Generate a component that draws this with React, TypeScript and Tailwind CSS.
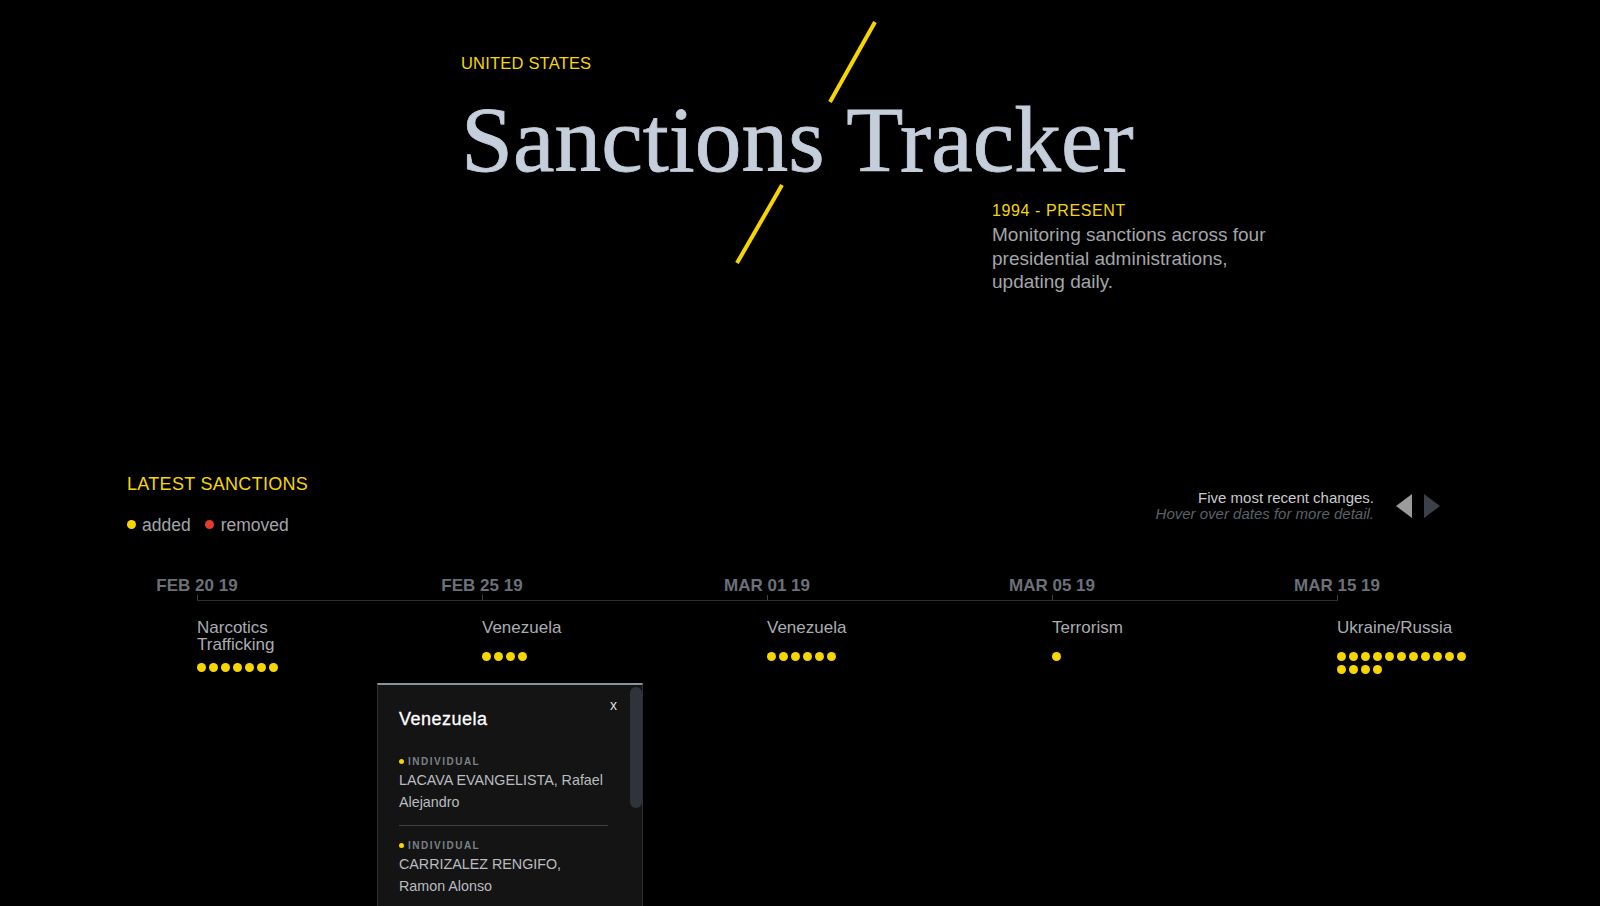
import { ReactNode } from 'react';

interface Change {
  date: string;
  category: string;
  added: number;
}

const CHANGES: Change[] = [
  { date: 'FEB 20 19', category: 'Narcotics Trafficking', added: 7 },
  { date: 'FEB 25 19', category: 'Venezuela', added: 4 },
  { date: 'MAR 01 19', category: 'Venezuela', added: 6 },
  { date: 'MAR 05 19', category: 'Terrorism', added: 1 },
  { date: 'MAR 15 19', category: 'Ukraine/Russia', added: 15 },
];

const DETAIL = [
  { type: 'INDIVIDUAL', name: 'LACAVA EVANGELISTA, Rafael Alejandro' },
  { type: 'INDIVIDUAL', name: 'CARRIZALEZ RENGIFO, Ramon Alonso' },
];

const SANS = "font-['Liberation_Sans',Arial,sans-serif]";

function Dot({ className }: { className: string }): ReactNode {
  return <span className={`inline-block shrink-0 rounded-full ${className}`} />;
}

export default function App() {
  return (
    <div className={`relative w-[1600px] h-[906px] overflow-hidden bg-black ${SANS}`}>
      {/* yellow slash behind the title */}
      <svg className="absolute left-0 top-0 pointer-events-none" width="1600" height="300">
        <line x1="875" y1="22" x2="830" y2="102" stroke="#f7d600" strokeWidth="4" />
        <line x1="782" y1="185" x2="737" y2="263" stroke="#f7d600" strokeWidth="4" />
      </svg>

      {/* Header */}
      <header className="pt-[53px] pl-[461px]">
        <p className="text-[16.5px] leading-[20px] tracking-[0.2px] text-[#f7d600]">UNITED STATES</p>
        <h1 className="mt-[20px] text-[93.5px] leading-[93px] text-[#c5cedb] font-['Liberation_Serif',Georgia,serif] whitespace-nowrap [-webkit-text-stroke:0.8px_#c5cedb]">
          Sanctions Tracker
        </h1>
        <div className="ml-[531px] mt-[15px] w-[300px]">
          <p className="text-[16px] leading-[20px] tracking-[0.6px] text-[#f7d600]">1994 - PRESENT</p>
          <p className="mt-[2px] text-[19px] leading-[23.5px] text-[#a3a6aa]">
            Monitoring sanctions across four presidential administrations, updating daily.
          </p>
        </div>
      </header>

      {/* Latest sanctions */}
      <section className="mt-[179px]">
        <div className="flex items-start justify-between pl-[127px] pr-[160px]">
          <div>
            <h2 className="text-[18px] leading-[22px] tracking-[0.3px] text-[#f7d600]">LATEST SANCTIONS</h2>
            <div className="mt-[19px] flex items-center text-[17.5px] leading-[22px] text-[#a3a6aa]">
              <Dot className="w-[9px] h-[9px] bg-[#f7d600]" />
              <span className="ml-[6px]">added</span>
              <Dot className="ml-[14px] w-[9px] h-[9px] bg-[#e33b2e]" />
              <span className="ml-[7px]">removed</span>
            </div>
          </div>
          <div className="mt-[17px] flex items-start">
            <div className="text-right text-[15px] leading-[16px]">
              <p className="text-[#c9cbce]">Five most recent changes.</p>
              <p className="italic text-[#5c6168]">Hover over dates for more detail.</p>
            </div>
            <div className="ml-[22px] mt-[4px] flex items-center gap-[12px]">
              <button className="w-0 h-0 border-y-[12.5px] border-y-transparent border-r-[16px] border-r-[#9b9b9b]" />
              <button className="w-0 h-0 border-y-[12.5px] border-y-transparent border-l-[16px] border-l-[#3c4048]" />
            </div>
          </div>
        </div>

        {/* Timeline */}
        <div className="mt-[40px] ml-[197px] flex">
          {CHANGES.map((c, i) => (
            <div key={c.date} className="w-[285px] shrink-0 flex flex-col">
              <div className="h-[19px] leading-[19px]">
                <span className="inline-block -translate-x-1/2 whitespace-nowrap text-[17px] font-bold text-[#6b7079]">
                  {c.date}
                </span>
              </div>
              <div className="w-px h-[5px] bg-[#3a3f46]" />
              <div className={`h-px bg-[#2c3036] ${i < CHANGES.length - 1 ? 'w-full' : 'w-px'}`} />
              <div className="mt-[18px] w-[135px]">
                <p className="min-h-[24px] text-[17px] leading-[17.5px] text-[#a9adb2]">{c.category}</p>
                <div className="mt-[9px] flex flex-wrap gap-x-[3px] gap-y-[4px]">
                  {Array.from({ length: c.added }).map((_, j) => (
                    <Dot key={j} className="w-[9px] h-[9px] bg-[#f7d600]" />
                  ))}
                </div>
              </div>
            </div>
          ))}
        </div>
      </section>

      {/* Detail popup */}
      <div className="absolute left-[377px] top-[683px] w-[266px] h-[240px] flex bg-[#141414] border-t-2 border-t-[#8c929a] border-x border-x-[#2b2f34]">
        <div className="w-[252px] pl-[21px] pr-[21px] pt-[23px]">
          <h3 className="text-[18px] leading-[22px] tracking-[0.5px] text-white [-webkit-text-stroke:0.3px_#ffffff]">Venezuela</h3>
          <div className="mt-[25px]">
            {DETAIL.map((d, i) => (
              <div key={i} className={i > 0 ? 'pt-[13px]' : ''}>
                <div className="flex items-center h-[12px]">
                  <Dot className="w-[5px] h-[5px] bg-[#f7d600]" />
                  <span className="ml-[4px] text-[10px] font-bold tracking-[1.5px] text-[#7b8088]">{d.type}</span>
                </div>
                <p className="mt-[2px] text-[14.3px] leading-[22px] text-[#b9bcc0]">{d.name}</p>
                <div className="mt-[12px] h-px w-[209px] bg-[#3a3d42]" />
              </div>
            ))}
          </div>
        </div>
        <div className="w-[12px] pt-[2px]">
          <div className="h-[121px] rounded-full bg-[#2f333a]" />
        </div>
        <button className="absolute right-[25px] top-[11px] text-[14px] leading-[18px] text-[#dddddd]">x</button>
      </div>
    </div>
  );
}
